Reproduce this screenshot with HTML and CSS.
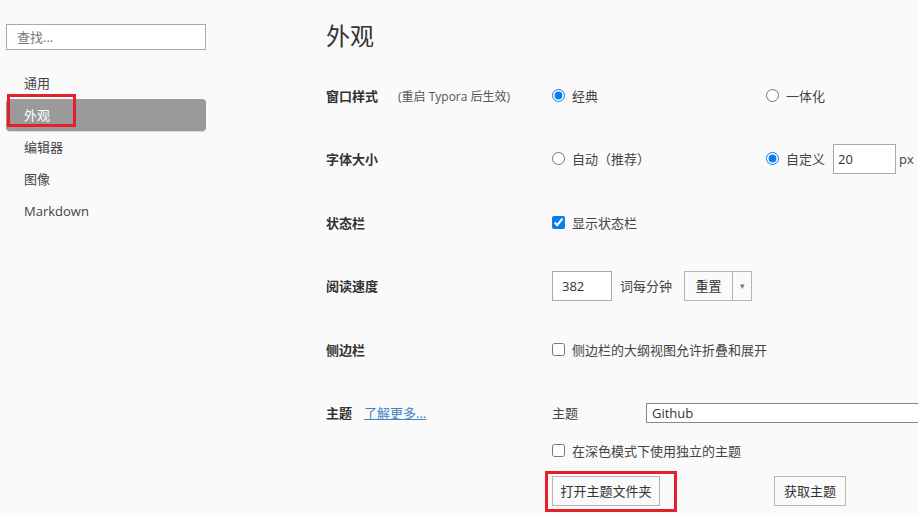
FILE: index.html
```html
<!DOCTYPE html>
<html lang="zh-CN">
<head>
    <meta charset="UTF-8">
    <meta name="viewport" content="width=device-width, initial-scale=1.0">
    <title>偏好设置 - 外观</title>
    <link rel="stylesheet" href="styles.css">
</head>
<body>
    <div class="app">
        <aside class="sidebar">
            <input type="text" class="search" placeholder="查找...">
            <ul class="nav">
                <li>通用</li>
                <li class="active">外观<span class="mark"></span></li>
                <li>编辑器</li>
                <li>图像</li>
                <li>Markdown</li>
            </ul>
        </aside>
        <main class="content">
            <h1>外观</h1>

            <div class="row">
                <div class="label">窗口样式<span class="note">(重启 Typora 后生效)</span></div>
                <div class="options">
                    <label class="opt first"><input type="radio" name="window" checked>经典</label>
                    <label class="opt"><input type="radio" name="window">一体化</label>
                </div>
            </div>

            <div class="row">
                <div class="label">字体大小</div>
                <div class="options">
                    <label class="opt first"><input type="radio" name="size">自动（推荐）</label>
                    <label class="opt"><input type="radio" name="size" checked>自定义</label>
                    <input type="text" class="field size-field" value="20">
                    <span class="unit">px</span>
                </div>
            </div>

            <div class="row">
                <div class="label">状态栏</div>
                <div class="options">
                    <label class="opt"><input type="checkbox" checked>显示状态栏</label>
                </div>
            </div>

            <div class="row">
                <div class="label">阅读速度</div>
                <div class="options">
                    <input type="text" class="field speed-field" value="382">
                    <span class="speed-unit">词每分钟</span>
                    <div class="split">
                        <button class="split-main">重置</button>
                        <button class="split-arrow">&#9662;</button>
                    </div>
                </div>
            </div>

            <div class="row">
                <div class="label">侧边栏</div>
                <div class="options">
                    <label class="opt"><input type="checkbox">侧边栏的大纲视图允许折叠和展开</label>
                </div>
            </div>

            <div class="row">
                <div class="label">主题<a href="#" class="more">了解更多...</a></div>
                <div class="options">
                    <span class="theme-name">主题</span>
                    <input type="text" class="theme-field" value="Github">
                </div>
            </div>

            <div class="sub-row">
                <label class="opt"><input type="checkbox">在深色模式下使用独立的主题</label>
            </div>

            <div class="sub-row buttons">
                <span class="marked"><button class="btn open-btn">打开主题文件夹</button></span>
                <button class="btn get-btn">获取主题</button>
            </div>
        </main>
    </div>
</body>
</html>
```

FILE: styles.css
```css
html, body {
    margin: 0;
    padding: 0;
    overflow: hidden;
}
body {
    background-color: #fafafa;
    color: #333;
    font-family: "Open Sans", "Noto Sans CJK SC", sans-serif;
    font-size: 13px;
}
.app {
    display: flex;
    width: 918px;
    height: 516px;
}
.sidebar {
    width: 200px;
    flex-shrink: 0;
    margin-left: 6px;
    padding-top: 24px;
}
.search {
    box-sizing: border-box;
    width: 200px;
    height: 26px;
    padding: 0 10px;
    border: 1px solid #a9a9a9;
    background-color: #fff;
    font-family: inherit;
    font-size: 13px;
    color: #333;
    outline: none;
}
.search::placeholder {
    color: #777;
}
.nav {
    list-style: none;
    margin: 17px 0 0;
    padding: 0;
}
.nav li {
    position: relative;
    height: 32px;
    line-height: 32px;
    padding-left: 18px;
    color: #444;
}
.nav li.active {
    background-color: #9a9a9a;
    color: #fff;
    border-radius: 4px;
    box-shadow: 0 1px 1px rgba(0, 0, 0, 0.15);
}
.mark {
    position: absolute;
    left: 1px;
    top: -5px;
    width: 69px;
    height: 33px;
    box-sizing: border-box;
    border: 3px solid #e5202a;
}
.content {
    margin-left: 120px;
    padding-top: 20px;
    flex: 1;
    min-width: 0;
}
h1 {
    margin: 0 0 28px;
    font-size: 24px;
    line-height: 32px;
    font-weight: normal;
    color: #333;
}
.row {
    display: flex;
    align-items: center;
    height: 30px;
    margin-bottom: 33.6px;
}
.row:nth-of-type(6) {
    margin-bottom: 0;
}
.label {
    width: 226px;
    flex-shrink: 0;
    font-weight: bold;
    color: #333;
}
.note {
    margin-left: 20px;
    font-weight: normal;
    font-size: 12px;
    color: #555;
}
.more {
    margin-left: 12px;
    font-weight: normal;
    color: #4183c4;
}
.options {
    display: flex;
    align-items: center;
    color: #444;
    white-space: nowrap;
}
.opt {
    display: flex;
    align-items: center;
    color: #444;
}
.opt.first {
    width: 214px;
}
.opt input {
    width: 13px;
    height: 13px;
    margin: 0 7px 0 0;
    accent-color: #0a7cf2;
}
.field {
    box-sizing: border-box;
    height: 30px;
    padding: 0 9px;
    border: 1px solid #aaa;
    background-color: #fff;
    font-family: inherit;
    font-size: 13px;
    color: #333;
    outline: none;
}
.size-field {
    width: 63px;
    margin-left: 8px;
    padding: 0 4px;
}
.unit {
    margin-left: 3px;
}
.speed-field {
    width: 60px;
}
.speed-unit {
    margin-left: 8px;
    margin-right: 12px;
}
.split {
    display: flex;
    height: 30px;
}
.split button {
    border: 1px solid #b5b5b5;
    background-color: #fafafa;
    font-family: inherit;
    font-size: 13px;
    color: #333;
    padding: 0;
}
.split-main {
    width: 49px;
}
.split-arrow {
    width: 19px;
    border-left: none !important;
    font-size: 9px !important;
    color: #777 !important;
}
.theme-name {
    width: 94px;
}
.theme-field {
    box-sizing: border-box;
    width: 300px;
    height: 20px;
    padding: 0 5px;
    border: 1px solid #888;
    background-color: #fff;
    font-family: inherit;
    font-size: 13px;
    color: #333;
    outline: none;
}
.sub-row {
    margin-left: 226px;
    display: flex;
    align-items: center;
    height: 20px;
    margin-top: 13px;
}
.buttons {
    height: 30px;
    margin-top: 15px;
}
.marked {
    position: relative;
    display: inline-block;
    height: 30px;
}
.marked::after {
    content: "";
    position: absolute;
    left: -7px;
    top: -5px;
    right: -17px;
    bottom: -6px;
    border: 3px solid #e5202a;
}
.btn {
    box-sizing: border-box;
    height: 30px;
    border: 1px solid #b5b5b5;
    background-color: #fafafa;
    font-family: inherit;
    font-size: 13px;
    color: #333;
    padding: 0;
}
.open-btn {
    width: 108px;
}
.get-btn {
    width: 72px;
    margin-left: 114px;
}
```
